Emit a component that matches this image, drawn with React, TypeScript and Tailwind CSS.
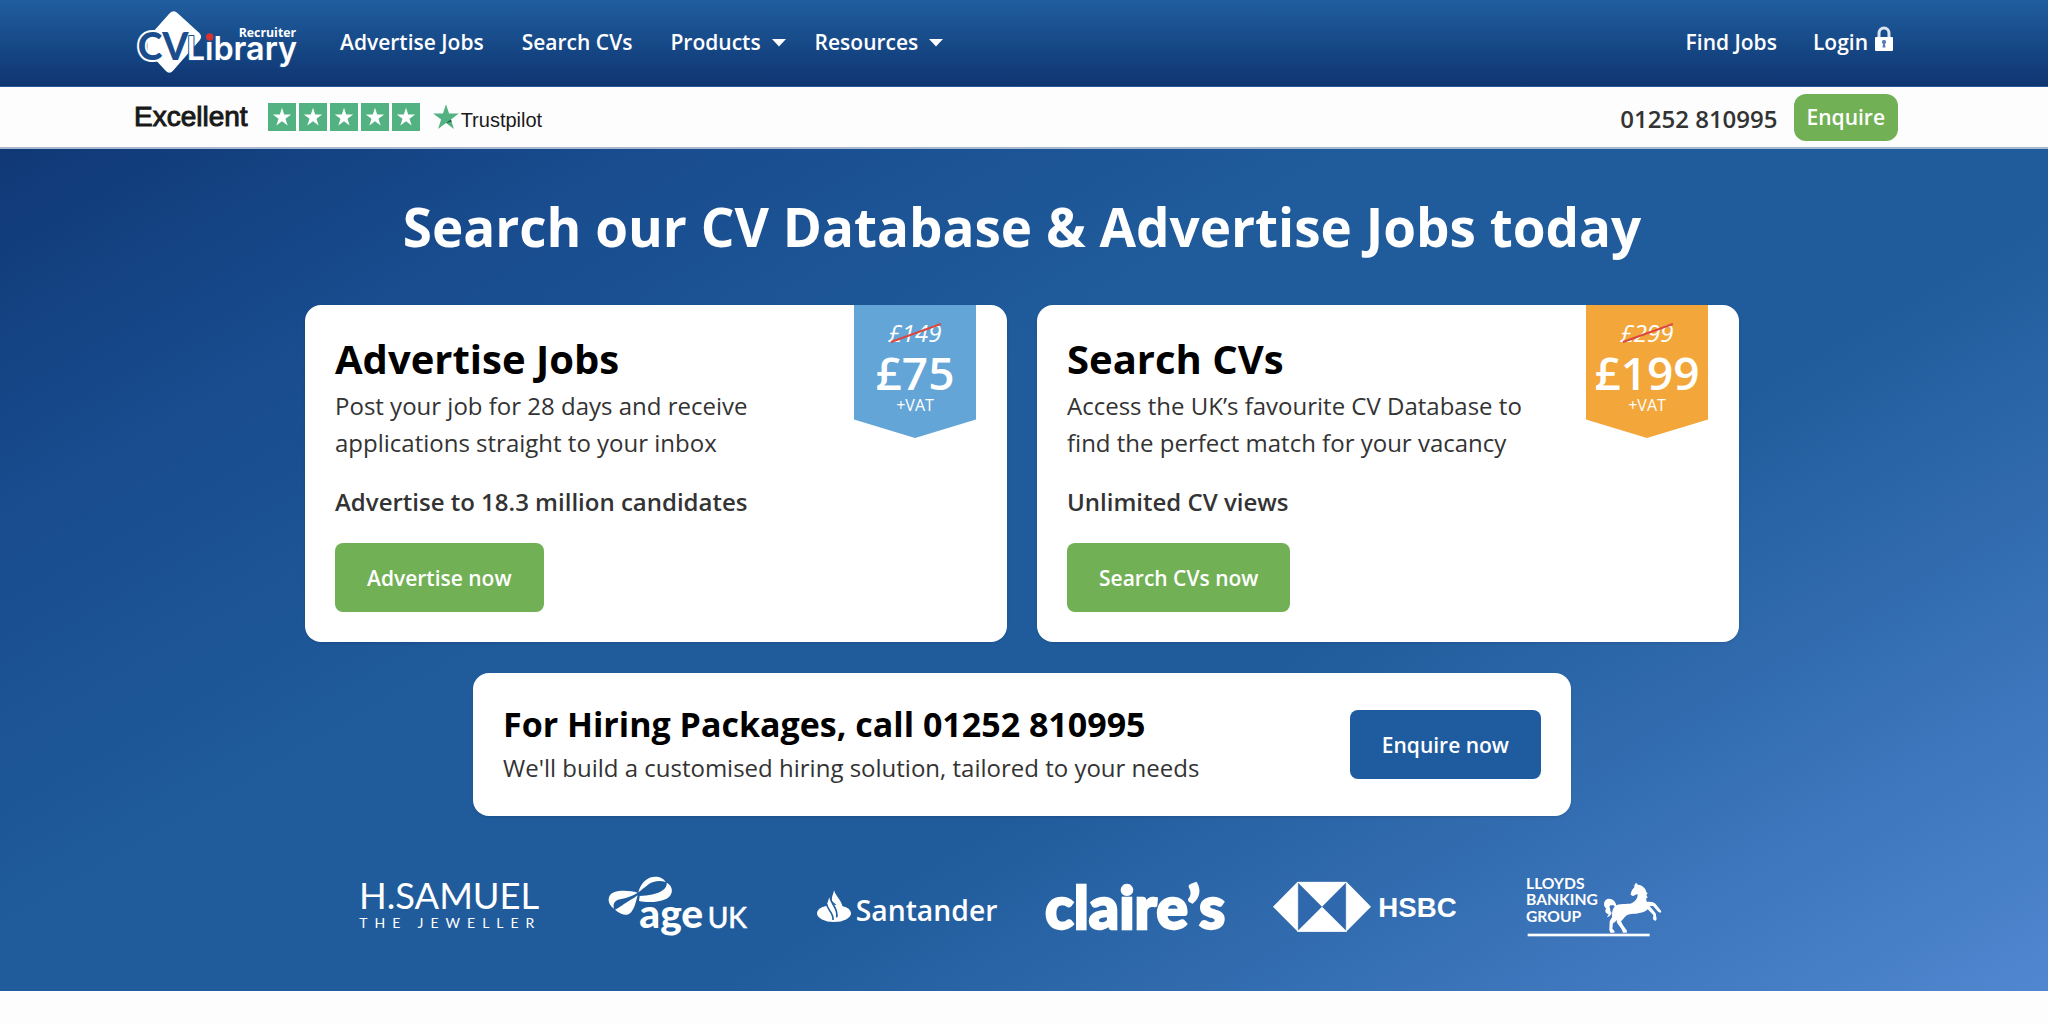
import React from 'react';

const STAR = 'M12 1 L14.6 9.1 H23 L16.2 14.1 L18.8 22.2 L12 17.2 L5.2 22.2 L7.8 14.1 L1 9.1 H9.4 Z';

const Logo: React.FC = () => (
  <svg viewBox="50 24 486 195" className="h-[65px] w-[162px]" role="img" aria-label="CV-Library Recruiter">
    <path
      d="M151 37 Q163 25 175 37 L240 96 Q250 106 241 118 L161 209 Q150 221 139 209 L84 150 L84 112 Z"
      fill="#fff"
    />
    <g fontFamily="Lato, sans-serif" fontWeight="900" stroke="#fff" strokeWidth="12" strokeLinejoin="round" paintOrder="stroke" fill="#1b4d8d">
      <text x="55" y="178" fontSize="112">CV</text>
    </g>
    <g fontFamily="Inter, sans-serif" fontWeight="600" fontSize="97" strokeLinejoin="round">
      <text x="202" y="178" fill="#fff" stroke="#1b4d8d" strokeWidth="6" paintOrder="stroke">Library</text>
    </g>
    <circle cx="271" cy="108" r="11" fill="#d8322e" />
    <text x="358" y="109" fontFamily="Open Sans, sans-serif" fontWeight="700" fontSize="37" fill="#fff">Recruiter</text>
  </svg>
);

const LockIcon: React.FC = () => (
  <svg viewBox="0 0 20 26" className="h-[26px] w-5" aria-hidden="true">
    <path d="M5 12 V7.5 a5 5.5 0 0 1 10 0 V12" fill="none" stroke="#dbe5f1" strokeWidth="3" />
    <rect x="1" y="11" width="18" height="14" rx="1" fill="#fff" />
    <path d="M10 14 a2 2 0 0 1 1 3.8 L11.5 21.5 H8.5 L9 17.8 A2 2 0 0 1 10 14" fill="#5b7fb0" />
  </svg>
);

const Caret: React.FC = () => (
  <svg viewBox="0 0 16 8" className="h-2 w-4" aria-hidden="true">
    <path d="M1 0 H15 L8 7.5 Z" fill="#fff" />
  </svg>
);

const HSamuel: React.FC = () => (
  <svg viewBox="57 45 546 192" className="w-[182px]" role="img" aria-label="H.Samuel The Jeweller">
    <g fontFamily="Lato, sans-serif" fill="#fff">
      <text x="57" y="146" fontSize="109">H.SAMUEL</text>
      <text x="58" y="205" fontSize="42" letterSpacing="21">THE JEWELLER</text>
    </g>
  </svg>
);

const AgeUk: React.FC = () => (
  <svg viewBox="744 45 546 192" className="w-[182px]" role="img" aria-label="Age UK">
    <path d="M893 98 C870 92 842 90 822 97 C800 105 801 133 822 146 C818 130 824 122 840 118 C860 114 878 108 893 98 Z" fill="#fff" />
    <path d="M825 149 C845 166 862 168 872 158 C884 146 888 124 893 106 C880 116 864 124 852 132 C842 139 834 145 825 149 Z" fill="#fff" />
    <path d="M895 97 C902 68 922 50 946 50 C960 50 972 56 977 66 C958 60 938 64 924 74 C912 83 904 90 895 97 Z" fill="#fff" />
    <path d="M980 68 C1000 78 1002 104 980 116 C956 128 920 128 897 123 L899 108 C926 106 950 102 966 92 C977 85 981 77 980 68 Z" fill="#fff" />
    <text x="898" y="204" fontFamily="Lato, sans-serif" fontWeight="900" fontSize="122" fill="#fff">age</text>
    <text x="1103" y="204" fontFamily="Lato, sans-serif" fontWeight="400" fontSize="84" fill="#fff" stroke="#fff" strokeWidth="2">UK</text>
  </svg>
);

const Santander: React.FC = () => (
  <svg viewBox="47 45 546 192" className="w-[182px]" role="img" aria-label="Santander">
    <ellipse cx="98" cy="160" rx="51" ry="26" fill="#fff" />
    <path d="M78 158 C72 136 80 128 84 111 C92 130 112 146 112 180 M92 124 C90 110 96 104 98 91 C104 112 126 124 124 150" fill="#fff" />
    <path d="M76 132 C78 150 98 160 95 180 M86 112 C90 134 112 146 106 172" fill="none" stroke="#225d9f" strokeWidth="5" />
    <text x="163" y="184" fontFamily="Open Sans, sans-serif" fontWeight="600" fontSize="85" fill="#fff">Santander</text>
  </svg>
);

const Claires: React.FC = () => (
  <svg viewBox="732 45 546 192" className="w-[182px]" role="img" aria-label="claire's">
    <text x="732" y="208" fontFamily="Lato, sans-serif" fontWeight="900" fontSize="178" fill="#fff" stroke="#fff" strokeWidth="7">claire’s</text>
  </svg>
);

const Hsbc: React.FC = () => (
  <svg viewBox="72 45 552 192" className="w-[184px]" role="img" aria-label="HSBC">
    <rect x="146" y="67" width="146" height="147" fill="#2f68ac" stroke="#fff" strokeWidth="3" />
    <path d="M72 140 L145 66 V214 Z M145 66 H293 L219 140 Z M145 214 H293 L219 140 Z M293 66 L366 140 L293 214 Z" fill="#fff" />
    <text x="388" y="172" fontFamily="Liberation Sans, sans-serif" fontWeight="700" fontSize="83" fill="#fff">HSBC</text>
  </svg>
);

const Lloyds: React.FC = () => (
  <svg viewBox="756 45 546 192" className="w-[182px]" role="img" aria-label="Lloyds Banking Group">
    <g fontFamily="Lato, sans-serif" fontWeight="700" fontSize="47" fill="#fff">
      <text x="825" y="87">LLOYDS</text>
      <text x="825" y="136">BANKING</text>
      <text x="825" y="185">GROUP</text>
    </g>
    <rect x="830" y="221" width="366" height="8" fill="#fff" />
    {/* rearing horse: body, then tail */}
    <path
      d="M1150 76 L1155 68 L1161 74 C1174 76 1184 84 1186 96 L1190 100 L1186 105 L1190 112 L1185 117 L1188 126 C1198 124 1208 126 1214 132 L1231 154 L1228 159 L1220 154 L1206 138 L1196 138 L1214 160 L1217 178 L1213 183 L1206 178 L1207 165 L1190 148 C1180 158 1160 162 1140 162 C1130 163 1122 168 1116 178 L1110 184 L1116 196 L1128 212 L1127 218 L1116 218 L1112 208 L1098 188 L1097 180 L1092 186 L1086 190 L1084 206 L1091 214 L1090 218 L1078 218 L1075 210 L1076 184 L1083 172 C1082 160 1084 146 1092 138 C1104 130 1128 134 1142 130 C1154 124 1160 116 1160 103 C1154 102 1151 108 1145 108 L1139 104 C1140 94 1144 88 1150 82 Z"
      fill="#fff"
    />
    <path d="M1094 143 C1088 132 1082 138 1078 136 C1072 140 1080 148 1078 154 C1086 158 1080 168 1068 172 L1073 162 C1060 160 1062 148 1066 146 C1054 138 1058 116 1074 116 C1088 116 1096 128 1096 140 Z" fill="#fff" />
  </svg>
);

interface OfferProps {
  title: string;
  text: string[];
  highlight: string;
  button: string;
  oldPrice: string;
  price: string;
  ribbon: string;
}

const offers: OfferProps[] = [
  {
    title: 'Advertise Jobs',
    text: ['Post your job for 28 days and receive', 'applications straight to your inbox'],
    highlight: 'Advertise to 18.3 million candidates',
    button: 'Advertise now',
    oldPrice: '£149',
    price: '£75',
    ribbon: 'bg-[#63a5d7]'
  },
  {
    title: 'Search CVs',
    text: ['Access the UK’s favourite CV Database to', 'find the perfect match for your vacancy'],
    highlight: 'Unlimited CV views',
    button: 'Search CVs now',
    oldPrice: '£299',
    price: '£199',
    ribbon: 'bg-[#f3a73b]'
  }
];

const OfferCard: React.FC<OfferProps> = ({ title, text, highlight, button, oldPrice, price, ribbon }) => (
  <article className="relative rounded-2xl bg-white p-[30px] shadow-sm">
    <h2 className="text-[40px] leading-[48px] font-bold text-black">{title}</h2>
    <p className="mt-1 text-2xl leading-[37px]">
      {text[0]}
      <br />
      {text[1]}
    </p>
    <p className="mt-[22px] text-2xl leading-[37px] font-semibold">{highlight}</p>
    <button className="mt-[23px] h-[69px] rounded-lg bg-[#72b055] px-8 pt-0.5 text-[21px] font-semibold text-white">
      {button}
    </button>

    {/* Price ribbon */}
    <div
      className={`absolute top-0 right-[31px] flex h-[133px] w-[122px] flex-col items-center pt-3 text-white [clip-path:polygon(0_0,100%_0,100%_86%,50%_100%,0_86%)] ${ribbon}`}
    >
      <div className="relative text-2xl leading-[31px] italic">
        {oldPrice}
        <svg viewBox="0 0 54 20" className="absolute inset-x-0 top-1.5 h-5 w-full" preserveAspectRatio="none" aria-hidden="true">
          <path d="M2 19 L53 1" stroke="#d9463e" strokeWidth="2" />
        </svg>
      </div>
      <div className="text-[46px] leading-[48px] font-semibold">{price}</div>
      <div className="text-base leading-[18px]">+VAT</div>
    </div>
  </article>
);

export const App: React.FC = () => {
  const clients = [HSamuel, AgeUk, Santander, Claires, Hsbc, Lloyds];

  return (
    <div className="min-h-screen bg-[#fdfdfd] font-['Open_Sans',sans-serif] text-[#333]">
      {/* Header */}
      <header className="border-b border-[#2a5796] bg-linear-to-b from-[#205e9f] to-[#0f3571] pr-4 text-[21px] font-semibold text-white">
        <div className="mx-auto flex h-[86px] max-w-[1764px] items-center justify-between">
          <div className="flex items-center">
            <a href="#home" className="ml-0.5 pb-1">
              <Logo />
            </a>
            <nav className="ml-[42px] flex items-center gap-[38px]">
              <a href="#advertise">Advertise Jobs</a>
              <a href="#search">Search CVs</a>
              <div className="flex gap-7">
                <a href="#products" className="flex items-center gap-2.5">
                  Products <Caret />
                </a>
                <a href="#resources" className="flex items-center gap-2.5">
                  Resources <Caret />
                </a>
              </div>
            </nav>
          </div>
          <nav className="flex items-center gap-9 pr-1">
            <a href="#find">Find Jobs</a>
            <a href="#login" className="flex items-center gap-1.5">
              Login
              <span className="pb-2">
                <LockIcon />
              </span>
            </a>
          </nav>
        </div>
      </header>

      {/* Trust bar */}
      <section className="border-b-2 border-[#a9b8cf] pr-4">
        <div className="mx-auto flex h-[60px] max-w-[1764px] items-center justify-between">
          <div className="flex items-center font-['Liberation_Sans',sans-serif] text-[#191919]">
            <span className="text-[28px] leading-8 [-webkit-text-stroke:1px_#191919]">Excellent</span>
            <div className="ml-5 flex gap-[3px]">
              {[1, 2, 3, 4, 5].map((n) => (
                <span key={n} className="flex size-7 items-center justify-center bg-[#52b281]">
                  <svg viewBox="0 0 24 24" className="size-5" aria-hidden="true">
                    <path d={STAR} fill="#fff" />
                  </svg>
                </span>
              ))}
            </div>
            <a href="#trustpilot" className="ml-3 flex items-center gap-px text-xl">
              <svg viewBox="0 0 24 24" className="size-7" aria-hidden="true">
                <path d={STAR} fill="#52b281" />
                <path d="M16.8 16 L16.2 14.1 L12 17.2 Z" fill="#1d5a43" />
              </svg>
              <span className="pt-1.5">Trustpilot</span>
            </a>
          </div>
          <div className="flex items-center gap-4">
            <a href="tel:01252810995" className="pt-1 text-2xl font-semibold">
              01252 810995
            </a>
            <button className="h-[47px] rounded-xl bg-[#72b055] px-[13px] pt-0.5 text-[21px] font-semibold text-white">
              Enquire
            </button>
          </div>
        </div>
      </section>

      {/* Hero */}
      <main className="bg-[linear-gradient(150deg,#103876_0%,#184c8e_18%,#205c9c_40%,#205c9c_62%,#5087d0_100%)] pt-[42px] pr-1 pb-[52px]">
        <h1 className="text-center text-[53px] leading-[72px] font-bold text-white">
          Search our CV Database &amp; Advertise Jobs today
        </h1>

        <div className="mx-auto mt-[42px] grid max-w-[1434px] grid-cols-2 gap-[30px]">
          {offers.map((offer) => (
            <OfferCard key={offer.title} {...offer} />
          ))}
        </div>

        <section className="mx-auto mt-[31px] flex max-w-[1098px] items-center justify-between rounded-2xl bg-white p-[30px] shadow-sm">
          <div>
            <h2 className="text-[34px] leading-[42px] font-bold text-black">For Hiring Packages, call 01252 810995</h2>
            <p className="mt-1 text-2xl leading-[37px]">We'll build a customised hiring solution, tailored to your needs</p>
          </div>
          <button className="h-[69px] rounded-lg bg-[#1f5c9f] px-8 pt-0.5 text-[21px] font-semibold text-white">Enquire now</button>
        </section>

        {/* Client logos */}
        <div className="mx-auto mt-[59px] grid max-w-[1372px] grid-cols-6 justify-items-center">
          {clients.map((Client, i) => (
            <Client key={i} />
          ))}
        </div>
      </main>
    </div>
  );
};

export default App;
